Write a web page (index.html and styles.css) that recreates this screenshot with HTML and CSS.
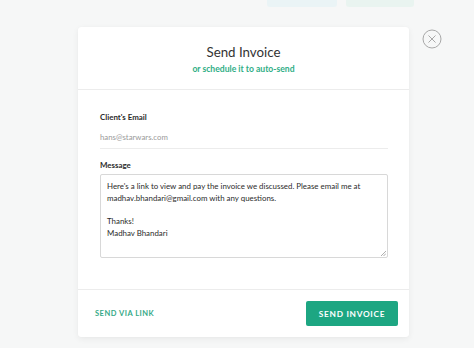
FILE: index.html
```html
<!DOCTYPE html>
<html>
<head>
<meta charset="utf-8">
<link rel="stylesheet" href="styles.css">
</head>
<body>
<div class="backdrop">
  <div class="topbars"><span class="pill pill-a"></span><span class="pill pill-b"></span></div>
  <div class="stage">
    <div class="modal">
      <div class="modal-head">
        <h1 class="title">Send Invoice</h1>
        <a class="schedule">or schedule it to auto-send</a>
      </div>
      <div class="modal-body">
        <label class="label">Client's Email</label>
        <div class="email">hans@starwars.com</div>
        <label class="label label-msg">Message</label>
        <div class="textarea">
          <p>Here's a link to view and pay the invoice we discussed. Please email me at<br>madhav.bhandari@gmail.com with any questions.</p>
          <p>Thanks!<br>Madhav Bhandari</p>
          <svg class="grip" width="6" height="6" viewBox="0 0 6 6"><path d="M1 6L6 1M3.5 6L6 3.5" stroke="#9a9a9a" stroke-width="0.8"/></svg>
        </div>
      </div>
      <div class="modal-foot">
        <a class="link-btn">SEND VIA LINK</a>
        <button class="primary">SEND INVOICE</button>
      </div>
    </div>
    <div class="close">
      <svg width="20" height="20" viewBox="0 0 20 20"><circle cx="10" cy="10" r="9" fill="none" stroke="#a8a8a8" stroke-width="1"/><path d="M6.5 6.5L13.5 13.5M13.5 6.5L6.5 13.5" stroke="#a8a8a8" stroke-width="1"/></svg>
    </div>
  </div>
</div>
</body>
</html>
```
FILE: styles.css
```css
html, body { margin: 0; padding: 0; }
body {
  background: #f6f7f7;
  font-family: Lato, "Open Sans", sans-serif;
  color: #333;
  width: 474px;
  height: 348px;
  overflow: hidden;
}
.backdrop { position: relative; height: 348px; }
.topbars { display: flex; gap: 9px; padding-left: 267px; height: 7px; }
.pill { display: block; height: 7px; border-radius: 0 0 3px 3px; }
.pill-a { width: 70px; background: #eaf4f6; }
.pill-b { width: 68px; background: #e9f4f0; }
.stage { display: flex; align-items: flex-start; padding-left: 78px; padding-top: 20px; }
.modal {
  width: 331px;
  background: #fff;
  border-radius: 3px;
  box-shadow: 0 2px 6px rgba(0,0,0,0.06), 0 0 1px rgba(0,0,0,0.05);
}
.modal-head {
  height: 62px;
  border-bottom: 1px solid #ececec;
  display: flex;
  flex-direction: column;
  align-items: center;
}
.title {
  margin: 16px 0 0;
  font-size: 13.3px;
  font-weight: 400;
  line-height: 18px;
  color: #333;
}
.schedule {
  margin-top: 2px;
  font-size: 8.6px;
  font-weight: 700;
  line-height: 12px;
  color: #2fae86;
}
.modal-body { padding: 21px 21px 0 22px; height: 178px; }
.label {
  display: block;
  font-size: 7.9px;
  font-weight: 700;
  line-height: 12px;
  color: #2b2b2b;
}
.email {
  margin-top: 8px;
  font-size: 7.8px;
  line-height: 12px;
  color: #9a9a9a;
  padding-bottom: 5px;
  border-bottom: 1px solid #ececec;
}
.label-msg { margin-top: 10px; }
.textarea {
  position: relative;
  margin-top: 3px;
  height: 73px;
  border: 1px solid #d8d8d8;
  border-radius: 2px;
  padding: 5px 0 4px 6px;
  font-size: 7.9px;
  line-height: 12px;
  color: #2b2b2b;
  white-space: nowrap;
}
.textarea p { margin: 0 0 11px; }
.grip { position: absolute; right: 1px; bottom: 1px; }
.modal-foot {
  height: 47px;
  border-top: 1px solid #ececec;
  display: flex;
  align-items: center;
  justify-content: space-between;
  padding: 0 11px 0 17px;
}
.link-btn {
  font-size: 7.5px;
  font-weight: 700;
  letter-spacing: 0.5px;
  color: #36a987;
}
.primary {
  width: 92px;
  height: 25px;
  border: 0;
  border-radius: 2px;
  background: #1da682;
  color: #fff;
  font-family: inherit;
  font-size: 8.3px;
  font-weight: 700;
  letter-spacing: 0.7px;
}
.close { margin-left: 13px; margin-top: 2px; }
```
